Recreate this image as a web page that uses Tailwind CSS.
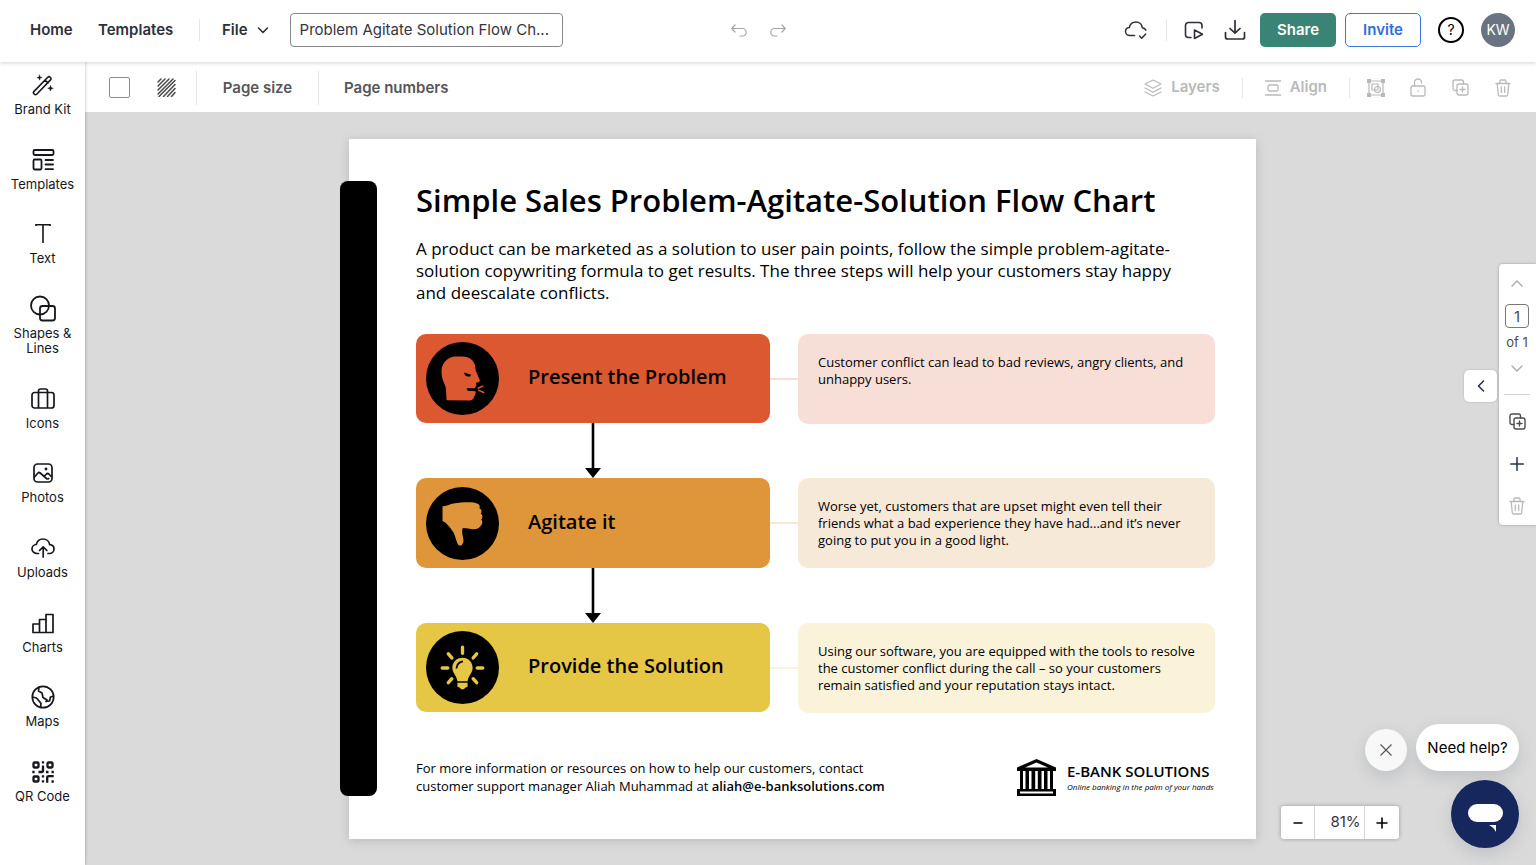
<!DOCTYPE html>
<html lang="en">
<head>
<meta charset="utf-8">
<title>Problem Agitate Solution Flow Chart</title>
<script src="https://cdn.jsdelivr.net/npm/@tailwindcss/browser@4"></script>
</head>
<body class="flex h-screen flex-col overflow-hidden bg-[#dadada] font-['Inter',sans-serif] text-black">

<header class="relative z-20 flex h-[62px] shrink-0 items-center bg-white pr-[21px] pb-[2px] pl-[30px] text-[15px] font-semibold text-[#2e2f3a] shadow-[0_1px_4px_rgba(0,0,0,0.18)]">
  <nav class="flex items-center">
    <a href="#" class="w-[68px]">Home</a>
    <a href="#" class="w-[101px]">Templates</a>
    <span class="h-[22px] w-px bg-gray-200"></span>
    <button class="ml-[22px] flex items-center gap-2">File
      <svg class="size-[14px]" viewBox="0 0 14 14" fill="none" stroke="currentColor" stroke-width="1.6" stroke-linecap="round" stroke-linejoin="round"><path d="M2.5 5 7 9.5 11.500 5"/></svg>
    </button>
  </nav>
  <input aria-label="Design title" value="Problem Agitate Solution Flow Ch..." class="ml-5 h-[34px] w-[273px] rounded-[4px] border border-[#85868c] px-[9px] pb-px font-normal text-[#34353f]">
  <div class="ml-[168px] flex gap-[23px] text-[#a5a5a5]">
    <button aria-label="Undo"><svg class="size-4" viewBox="0 0 16 16" fill="none" stroke="currentColor" stroke-width="1.200" stroke-linecap="round" stroke-linejoin="round"><path d="M4 3 .8 6.500 4 10M1 6.500h10.500a3.700 3.700 0 0 1 0 7.500H9"/></svg></button>
    <button aria-label="Redo"><svg class="size-4" viewBox="0 0 16 16" fill="none" stroke="currentColor" stroke-width="1.200" stroke-linecap="round" stroke-linejoin="round"><path d="M12 3l3.200 3.500L12 10M15 6.500H4.500a3.700 3.700 0 0 0 0 7.500H7"/></svg></button>
  </div>
  <div class="ml-auto flex items-center">
    <button aria-label="Saved to cloud"><svg class="h-[20px] w-[24px]" viewBox="0 0 24 20" fill="none" stroke="currentColor" stroke-width="1.500" stroke-linecap="round" stroke-linejoin="round"><path d="M10.500 15.500H6C3.500 15.500 1.500 13.700 1.500 11.500S3.200 7.700 5.300 7.500C6 4.300 8.800 2 12 2c3.400 0 6 2.500 6.300 5.800 1.500.2 2.800 1.100 3.600 2.400M15.500 16l2.200 2.200 4-4.200"/></svg></button>
    <span class="ml-[18px] h-[22px] w-px bg-gray-200"></span>
    <button aria-label="Preview" class="ml-[17px]"><svg class="size-5" viewBox="0 0 20 20" fill="none" stroke="currentColor" stroke-width="1.600" stroke-linecap="round" stroke-linejoin="round"><path d="M7 17.500H4.500a3 3 0 0 1-3-3v-9a3 3 0 0 1 3-3H15a3 3 0 0 1 3 3V8M10.500 10v8.500l8-4.200z"/></svg></button>
    <button aria-label="Download" class="ml-5"><svg class="size-[22px]" viewBox="0 0 22 22" fill="none" stroke="currentColor" stroke-width="1.700" stroke-linecap="round" stroke-linejoin="round"><path d="M11 1.500V14M6 9.500l5 4.700 5-4.700M1.500 13.500V18a2 2 0 0 0 2 2h15a2 2 0 0 0 2-2v-4.500"/></svg></button>
    <button class="ml-[14px] h-[34px] w-[76px] rounded-[5px] bg-[#398475] text-white">Share</button>
    <button class="ml-[9px] h-[34px] w-[76px] rounded-[5px] border border-[#3b78e0] text-[#316ee0]">Invite</button>
    <button aria-label="Help" class="ml-[17px] flex size-[26px] items-center justify-center rounded-full border-2 border-black text-sm font-normal text-black">?</button>
    <button aria-label="Account" class="ml-[17px] size-[34px] rounded-full bg-[#6a7480] text-sm font-normal text-white">KW</button>
  </div>
</header>

<div class="flex min-h-0 grow">
<nav aria-label="Tools" class="relative z-10 flex w-[85px] shrink-0 flex-col bg-white pt-[11px] text-center text-[13px] leading-[15px] text-[#16171c] shadow-[0_0_3px_rgba(0,0,0,0.3)]">
  <button class="flex h-[75px] flex-col items-center gap-[5px]">
    <svg class="size-6" viewBox="0 0 24 24" fill="none" stroke="currentColor" stroke-width="1.600" stroke-linejoin="round" stroke-linecap="round"><path d="M2.800 18.600 16.800 4.200a1.600 1.600 0 0 1 2.400 0l.3.300a1.600 1.600 0 0 1 0 2.400L5.700 21.200a1.600 1.600 0 0 1-2.300 0l-.6-.500a1.500 1.500 0 0 1 0-2.100zM14 7l3 3"/><path fill="currentColor" stroke-width=".4" d="M8.500 2l.7 1.900 1.900.7-1.900.7-.7 1.900-.7-1.900-1.900-.7 1.900-.7zM19.500 12.500l.8 2 2 .8-2 .8-.8 2-.8-2-2-.8 2-.8z"/></svg>
    <span>Brand Kit</span></button>
  <button class="flex h-[74px] flex-col items-center gap-[5px]">
    <svg class="size-6" viewBox="0 0 24 24" fill="none" stroke="currentColor" stroke-width="1.800" stroke-linecap="round"><rect x="2.500" y="2" width="20" height="5" rx="1.200"/><rect x="2.500" y="11.500" width="8" height="10" rx="1.200"/><path d="M14.500 12h7.500M14.500 16.500h7.500M14.500 21.200h7.500"/></svg>
    <span>Templates</span></button>
  <button class="flex h-[75px] flex-col items-center gap-[5px]">
    <svg class="size-6" viewBox="0 0 24 24" fill="none" stroke="currentColor" stroke-width="1.600"><path d="M5 4V2.800h14V4M12 2.800V21"/></svg>
    <span>Text</span></button>
  <button class="flex h-[90px] flex-col items-center gap-[5px]">
    <svg class="size-6 overflow-visible" viewBox="0 0 24 24" fill="none" stroke="currentColor" stroke-width="1.800"><circle cx="9" cy="8.500" r="9"/><rect x="9" y="9" width="15" height="14.500" rx="2.500"/></svg>
    <span>Shapes &amp;<br>Lines</span></button>
  <button class="flex h-[74px] flex-col items-center gap-[5px]">
    <svg class="size-6" viewBox="0 0 24 24" fill="none" stroke="currentColor" stroke-width="1.700"><rect x="1" y="5.500" width="22" height="15.500" rx="2.500"/><path d="M7.500 21V4a2 2 0 0 1 2-2h5a2 2 0 0 1 2 2v17"/></svg>
    <span>Icons</span></button>
  <button class="flex h-[75px] flex-col items-center gap-[5px]">
    <svg class="size-6" viewBox="0 0 24 24" fill="none" stroke="currentColor" stroke-width="1.700" stroke-linejoin="round"><rect x="3" y="3" width="18" height="18" rx="3.500"/><path d="M3 16.500l4-4.500q1-1 2.200 0l6.300 5.500q1.500 1.200 2.500-.5M13 15.500l2.500-2.500q1.200-1 2.300 0l3 3"/><circle cx="15" cy="8" r=".6" fill="currentColor"/></svg>
    <span>Photos</span></button>
  <button class="flex h-[75px] flex-col items-center gap-[5px]">
    <svg class="size-6" viewBox="0 0 24 24" fill="none" stroke="currentColor" stroke-width="1.700" stroke-linecap="round" stroke-linejoin="round"><path d="M7.500 17.500H6C3.300 17.500 1 15.500 1 12.900 1 10.500 3 8.700 5.300 8.500 6 5.300 8.700 3 12 3c3.400 0 6.200 2.500 6.700 5.700 2.500.2 4.300 2 4.300 4.300 0 2.500-2 4.500-4.500 4.500h-1.500M12.200 21V11M8.500 14.500l3.700-3.700 3.700 3.700"/></svg>
    <span>Uploads</span></button>
  <button class="flex h-[74px] flex-col items-center gap-[5px]">
    <svg class="size-6" viewBox="0 0 24 24" fill="none" stroke="currentColor" stroke-width="1.700" stroke-linejoin="round"><path d="M2 13h6.500v8.500H2zM8.500 8.500H15v13H8.500zM15 3.500h7v18h-7z"/></svg>
    <span>Charts</span></button>
  <button class="flex h-[75px] flex-col items-center gap-[5px]">
    <svg class="size-6" viewBox="0 0 24 24" fill="none" stroke="currentColor" stroke-width="1.700" stroke-linejoin="round"><circle cx="12" cy="12" r="10.700"/><path d="M8 2l-.5 4 3.500 2 1 4.500 4 2.500-1 1.500 3.500-.5 1-4 3.500-1M1.500 12l4 1 3 3.500 1.500 2-.5 4"/></svg>
    <span>Maps</span></button>
  <button class="flex h-[75px] flex-col items-center gap-[5px]">
    <svg class="size-6" viewBox="0 0 24 24" fill="none" stroke="currentColor" stroke-width="2.300"><rect x="2.500" y="2.500" width="5" height="5" rx="1"/><rect x="16.500" y="2.500" width="5" height="5" rx="1"/><rect x="2.500" y="16.500" width="5" height="5" rx="1"/><path d="M12 1.200v2.300M12 5.500v5q0 1.500-1.500 1.500H7.500M1.300 12h2.300M15 12h2.500M20.500 12h2.300M12 15.300v2.300M12 20.300v2.300M16.200 22.700v-5q0-1.500 1.500-1.500h5M20.500 21.500h2.300"/></svg>
    <span>QR Code</span></button>
</nav>

<div class="flex min-w-0 grow flex-col">
  <div class="flex h-[50px] shrink-0 items-center bg-white pt-px pr-[25px] pl-6 text-[15px] font-semibold text-[#55565a]">
    <button aria-label="Background color" class="size-[21px] rounded-[2px] border border-[#8c8c8c] bg-white"></button>
    <button aria-label="Background pattern" class="ml-[27px]"><svg class="size-[19px]" viewBox="0 0 19 19" stroke="#484848" stroke-width="1.500" stroke-linecap="round"><path d="M1 4 4 1M1 8 8 1M1 12 12 1M1 16 16 1M2 18.500 18 2.500M6.500 18.500 18 6.500M10.500 18.500 18 10.500M14.500 18.500 18 14.500"/></svg></button>
    <span class="ml-5 h-[34px] w-px bg-gray-200"></span>
    <button class="w-[121px] pt-px">Page size</button>
    <span class="h-[34px] w-px bg-gray-200"></span>
    <button class="ml-[25px] pt-px">Page numbers</button>
    <div class="ml-auto flex items-center text-[#b9b9b9]">
      <button class="flex items-center gap-[9px]"><svg class="size-[18px]" viewBox="0 0 18 18" fill="none" stroke="currentColor" stroke-width="1.200" stroke-linejoin="round" stroke-linecap="round"><path d="M9 1l8 4-8 4.200L1 5zM1 9l8 4.200L17 9M1 13l8 4 8-4"/></svg>Layers</button>
      <span class="ml-[22px] h-5 w-px bg-gray-200"></span>
      <button class="ml-[22px] flex items-center gap-[9px]"><svg class="size-4" viewBox="0 0 16 16" fill="none" stroke="currentColor" stroke-width="1.300"><path d="M0 1h16M0 15h16"/><rect x="3" y="5" width="10" height="6" rx="1.500"/></svg>Align</button>
      <span class="ml-[22px] h-5 w-px bg-gray-200"></span>
      <button aria-label="Group" class="ml-[17px]"><svg class="size-[18px]" viewBox="0 0 18 18" fill="none" stroke="currentColor" stroke-width="1.200"><path d="M2 2h14v14H2z"/><path d="M0 0h4v4H0zM14 0h4v4h-4zM0 14h4v4H0zM14 14h4v4h-4z" fill="currentColor" stroke="none"/><path d="M5 5h6v6H5z"/><circle cx="10.500" cy="10.500" r="3"/></svg></button>
      <button aria-label="Lock" class="ml-[25px]"><svg class="h-[19px] w-4" viewBox="0 0 16 19" fill="none" stroke="currentColor" stroke-width="1.300" stroke-linecap="round"><rect x="1" y="8" width="14" height="10" rx="1.500"/><path d="M4.500 8V4.500a3.500 3.500 0 0 1 7 0V5M8 12.800v.4"/></svg></button>
      <button aria-label="Duplicate" class="ml-[26px]"><svg class="size-[17px]" viewBox="0 0 17 17" fill="none" stroke="currentColor" stroke-width="1.300" stroke-linecap="round"><rect x="5" y="5" width="11" height="11" rx="2"/><path d="M5 11.500H3a2 2 0 0 1-2-2V3a2 2 0 0 1 2-2h6.500a2 2 0 0 1 2 2v2M10.500 8v5M8 10.500h5"/></svg></button>
      <button aria-label="Delete" class="ml-[26px]"><svg class="h-[18px] w-4" viewBox="0 0 16 18" fill="none" stroke="currentColor" stroke-width="1.300" stroke-linecap="round" stroke-linejoin="round"><path d="M1 4.500h14M2.200 4.500l1.100 11.300q.1 1.200 1.300 1.200h6.800q1.200 0 1.300-1.200l1.100-11.300M5 4.500V2.200Q5 1 6.200 1h3.600Q11 1 11 2.200v2.300M6.300 8v5.500M9.700 8v5.500"/></svg></button>
    </div>
  </div>

  <main class="relative flex grow justify-center pt-[27px] pr-[16px]">
    <article class="relative flex h-[700px] w-[907px] shrink-0 flex-col bg-white pt-[39px] pr-[41px] pl-[67px] font-['Open_Sans',sans-serif] shadow-[0_2px_10px_rgba(0,0,0,0.15)]">
      <div class="absolute top-[42px] left-[-9px] h-[615px] w-[37px] rounded-lg bg-black"></div>
      <h1 class="text-[31px] leading-[44px] font-semibold whitespace-nowrap">Simple Sales Problem-Agitate-Solution Flow Chart</h1>
      <p class="mt-[16px] text-[17px] leading-[22px] whitespace-nowrap">A product can be marketed as a solution to user pain points, follow the simple problem-agitate-<br>solution copywriting formula to get results. The three steps will help your customers stay happy<br>and deescalate conflicts.</p>

      <section class="mt-[30px] flex items-start">
        <div class="flex h-[89px] w-[354px] items-center rounded-[10px] bg-[#db5831] pl-[10px]">
          <svg class="size-[73px]" viewBox="0 0 72 72"><circle cx="36" cy="36" r="36"/><path fill="#db5831" d="M20.300 57.500 19.700 47C19.500 44 18.500 42.500 17.700 40.300 16 37 15.300 33 15.300 28.700 15.300 24 18 19 22 16.500 25 14.500 28 14.300 32 14.300 37 14.300 40 14.300 43 16 47 18.500 48.700 22 48.700 25.300 48.700 28 49.500 29 50.500 31.500L53 37.500C53.300 38.500 53 39.300 51.500 39.600L49.300 40.300 49.700 43 48 45.500H41v1.800L49 48.500C49.300 50.500 48.500 52 47.500 54 46.500 56.500 45.500 57.600 43 57.600z"/><path d="M37.500 30 44.500 32.300 43.500 34C41 34.300 38 33.500 37.500 30zM40 45.500 50 46.800V48.500L41 48z"/><path d="M51 45.800l5.500-2.500M51.500 47.500l6 2.500" stroke="#db5831" stroke-width="1.500"/></svg>
          <h2 class="ml-[29px] pb-[3px] text-[20px] font-semibold">Present the Problem</h2>
        </div>
        <div class="mt-[44px] h-[2px] w-[28px] bg-[#f7dfd8]"></div>
        <p class="h-[90px] w-[417px] rounded-[10px] bg-[#f7dfd8] px-5 pt-[20px] text-[13px] leading-[17px] whitespace-nowrap">Customer conflict can lead to bad reviews, angry clients, and<br>unhappy users.</p>
      </section>
      <svg class="-mt-px ml-[169px] h-[55px] w-4 shrink-0" viewBox="0 0 16 55"><path d="M6.700 0h2.600v45H16L8 55 0 45h6.700z"/></svg>
      <section class="flex items-start">
        <div class="flex h-[90px] w-[354px] items-center rounded-[10px] bg-[#df953a] pl-[10px]">
          <svg class="size-[73px]" viewBox="0 0 72 72"><circle cx="36" cy="36" r="36"/><path fill="#df953a" d="M16.300 19C20 19 23 17 27 16.300 32 15.300 37 15 42 15 46 15 48.500 15.500 50.300 16.300 52.500 17 53.500 18.500 52.700 21 54.500 21.700 55.500 24 54 26.500 56 27.500 56.300 30 54.500 32 56 33.500 55.800 36.500 54.300 37.700 53.500 40 51 41.500 47 41.700 43.500 41.500 40 40.500 36.300 40.500 35.300 43 35.600 45 36 47 36.500 50 37.500 52.500 36.500 55 35.800 57.500 34 58.300 32.300 57.500 30.800 56 30.500 54 29.700 52 28.500 48.500 28 46 26.300 43.700 24.500 41 22.500 38.500 20.300 36.300 19.500 35 18 34 16.300 33.700z"/></svg>
          <h2 class="ml-[29px] pb-[3px] text-[20px] font-semibold">Agitate it</h2>
        </div>
        <div class="mt-[44px] h-[2px] w-[28px] bg-[#f7e9d8]"></div>
        <p class="h-[90px] w-[417px] rounded-[10px] bg-[#f7e9d8] px-5 pt-[20px] text-[13px] leading-[17px] whitespace-nowrap">Worse yet, customers that are upset might even tell their<br>friends what a bad experience they have had...and it’s never<br>going to put you in a good light.</p>
      </section>
      <svg class="ml-[169px] h-[55px] w-4 shrink-0" viewBox="0 0 16 55"><path d="M6.700 0h2.600v45H16L8 55 0 45h6.700z"/></svg>
      <section class="flex items-start">
        <div class="flex h-[89px] w-[354px] items-center rounded-[10px] bg-[#e5c645] pl-[10px]">
          <svg class="size-[73px]" viewBox="0 0 72 72"><circle cx="36" cy="36" r="36"/><g fill="#e5c645"><path d="M36 26.500c-6 0-10 4.500-10 10 0 5 4 7 5 13h10c1-6 5-8 5-13 0-5.500-4-10-10-10zM31 51h10v4l-2.500 1-1 1.500h-3l-1-1.500-2.500-1z"/></g><path d="M30 37c.5-4 2.500-6.500 6.500-7" fill="none" stroke="#000" stroke-width="1.700"/><path d="M36 16v6M16 36.500h5.500M50.500 36.500H56M22 22.500l3.500 4M50 22.500l-3.500 4M22 51l3.500-4M50 51l-3.500-4" stroke="#e5c645" stroke-width="3.300" stroke-linecap="round"/></svg>
          <h2 class="ml-[29px] pb-[3px] text-[20px] font-semibold">Provide the Solution</h2>
        </div>
        <div class="mt-[44px] h-[2px] w-[28px] bg-[#faf2d9]"></div>
        <p class="h-[90px] w-[417px] rounded-[10px] bg-[#faf2d9] px-5 pt-[20px] text-[13px] leading-[17px] whitespace-nowrap">Using our software, you are equipped with the tools to resolve<br>the customer conflict during the call – so your customers<br>remain satisfied and your reputation stays intact.</p>
      </section>
      <footer class="mt-[46px] flex justify-between">
        <p class="text-[13px] leading-[18px] whitespace-nowrap">For more information or resources on how to help our customers, contact<br>customer support manager Aliah Muhammad at <strong class="font-semibold">aliah@e-banksolutions.com</strong></p>
        <div class="flex w-[198px] gap-[11px]">
          <svg class="h-[37px] w-[39px] shrink-0" viewBox="0 0 39 37"><path fill-rule="evenodd" d="M19.500 0 39 8.500V12h-3v18h3v7H0v-7h3V12H0V8.500zM19.500 3.500 8 8.500h23zM6 12h2.500v18H6zM12 12h2.500v18H12zM18.200 12h2.600v18h-2.600zM24.500 12H27v18h-2.500zM30.500 12H33v18h-2.500zM3 32.500h33v2H3z"/></svg>
          <div class="pt-[2px] whitespace-nowrap">
            <p class="text-[15px] leading-[20px] font-semibold">E-BANK SOLUTIONS</p>
            <p class="text-[8px] leading-[12px] italic">Online banking in the palm of your hands</p>
          </div>
        </div>
      </footer>
    </article>

    <button aria-label="Open pages" class="absolute top-[258px] right-[39px] flex h-8 w-[33px] items-center justify-center rounded-[5px] bg-white text-[#26324b] shadow-[0_0_2px_rgba(0,0,0,0.25)]"><svg class="size-3" viewBox="0 0 12 12" fill="none" stroke="currentColor" stroke-width="1.600" stroke-linecap="round" stroke-linejoin="round"><path d="M8.500 1 3.500 6l5 5"/></svg></button>
    <aside class="absolute top-[152px] right-0 flex h-[261px] w-[37px] flex-col items-center rounded-l-[4px] bg-white pt-[15px] pr-px text-[#4b4c52] shadow-[0_0_3px_rgba(0,0,0,0.3)]">
      <button aria-label="Previous page" class="text-[#a6abb3]"><svg class="h-2 w-3" viewBox="0 0 12 8" fill="none" stroke="currentColor" stroke-width="1.400" stroke-linecap="round"><path d="M1 7l5-5 5 5"/></svg></button>
      <input aria-label="Page number" value="1" class="mt-[17px] h-6 w-6 rounded-[4px] border border-[#77787d] text-center text-[15px]">
      <span class="mt-[5px] text-[13px] leading-[18px]">of 1</span>
      <button aria-label="Next page" class="mt-[14px] text-[#a6abb3]"><svg class="h-2 w-3" viewBox="0 0 12 8" fill="none" stroke="currentColor" stroke-width="1.400" stroke-linecap="round"><path d="M1 1l5 5 5-5"/></svg></button>
      <span class="mt-[21px] h-px w-[26px] bg-gray-300"></span>
      <button aria-label="Duplicate page" class="mt-[18px]"><svg class="size-[17px]" viewBox="0 0 17 17" fill="none" stroke="currentColor" stroke-width="1.400" stroke-linecap="round"><rect x="5" y="5" width="11" height="11" rx="2"/><path d="M5 11.500H3a2 2 0 0 1-2-2V3a2 2 0 0 1 2-2h6.500a2 2 0 0 1 2 2v2M10.500 8v5M8 10.500h5"/></svg></button>
      <button aria-label="Add page" class="mt-[27px] text-[#26324b]"><svg class="size-[14px]" viewBox="0 0 14 14" stroke="currentColor" stroke-width="1.500" stroke-linecap="round"><path d="M7 .7v12.600M.7 7h12.600"/></svg></button>
      <button aria-label="Delete page" class="mt-[26px] text-[#b9b9b9]"><svg class="h-[18px] w-4" viewBox="0 0 16 18" fill="none" stroke="currentColor" stroke-width="1.300" stroke-linecap="round" stroke-linejoin="round"><path d="M1 4.500h14M2.200 4.500l1.100 11.300q.1 1.200 1.300 1.200h6.800q1.200 0 1.300-1.200l1.100-11.300M5 4.500V2.200Q5 1 6.200 1h3.600Q11 1 11 2.200v2.300M6.300 8v5.500M9.700 8v5.500"/></svg></button>
    </aside>

    <div class="absolute right-[137px] bottom-[26px] flex h-[33px] w-[118px] divide-x divide-gray-300 rounded-[3px] bg-white text-[15px] text-[#34353f] shadow-[0_0_4px_rgba(0,0,0,0.3)]">
      <button aria-label="Zoom out" class="flex w-[34px] items-center justify-center text-black"><svg class="size-3" viewBox="0 0 12 12" stroke="currentColor" stroke-width="1.500"><path d="M1.500 6h9"/></svg></button>
      <button class="grow pl-3">81%</button>
      <button aria-label="Zoom in" class="flex w-[34px] items-center justify-center text-black"><svg class="size-3" viewBox="0 0 12 12" stroke="currentColor" stroke-width="1.600"><path d="M.5 6h11M6 .5v11"/></svg></button>
    </div>
    <button aria-label="Dismiss help" class="absolute right-[129px] bottom-[94px] flex size-[42px] items-center justify-center rounded-full bg-[#f8f8f8] shadow-[0_6px_16px_rgba(50,70,80,0.16)]"><svg class="size-3" viewBox="0 0 12 12" stroke="#555" stroke-width="1.100"><path d="M.5.5l11 11M11.500.5l-11 11"/></svg></button>
    <button class="absolute right-[17px] bottom-[94px] h-[47px] w-[103px] rounded-full bg-white pt-px text-[15px] shadow-[0_6px_16px_rgba(50,70,80,0.16)]">Need help?</button>
    <button aria-label="Open chat" class="absolute right-[17px] bottom-[17px] size-[68px] rounded-full bg-[#15275d] shadow-[0_6px_16px_rgba(50,70,80,0.16)]"><svg class="size-[68px]" viewBox="0 0 68 68" fill="#fff"><rect x="17" y="24" width="35" height="18" rx="9"/><path d="M38 45h7v7q-2-4.500-7-7z"/></svg></button>
  </main>
</div>
</div>
</body>
</html>
